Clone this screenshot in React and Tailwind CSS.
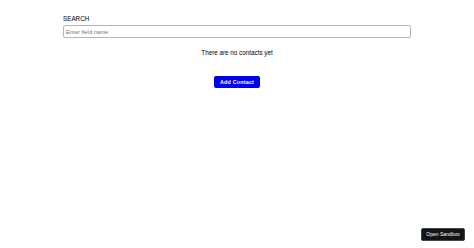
import React, { useState } from 'react';

const App = () => {
  const [query, setQuery] = useState('');

  return (
    <div className="relative min-h-[248px] w-full bg-white font-['Liberation_Sans',Arial,sans-serif]">
      <div className="mx-auto w-[348px] pt-[15px]">
        <label className="block text-[6.3px] leading-[8px] text-black uppercase mb-[2px]">Search</label>
        <input
          value={query}
          onChange={(e) => setQuery(e.target.value)}
          placeholder="Enter field name"
          className="block w-full h-[13px] rounded-[2px] border border-[#b5b5b5] px-[2px] text-[5.8px] text-[#333] placeholder:text-[#777] outline-none"
        />
        <p className="mt-[11px] text-center text-[6.3px] leading-[8px] text-black">There are no contacts yet</p>
        <div className="mt-[19px] flex justify-center">
          <button className="h-[12px] w-[46px] rounded-[2px] bg-[#0000ee] text-[5.4px] font-bold text-white tracking-[0.2px]">
            Add Contact
          </button>
        </div>
      </div>
      <button className="absolute right-[9px] bottom-[7px] h-[13px] w-[44px] rounded-[2px] border border-[#444] bg-[#151515] text-[5px] text-white">
        Open Sandbox
      </button>
    </div>
  );
};

export default App;
